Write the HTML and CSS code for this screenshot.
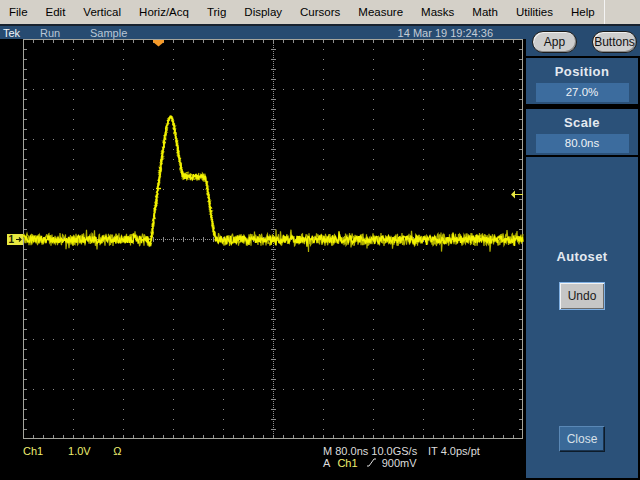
FILE: index.html
```html
<!DOCTYPE html>
<html>
<head>
    <title>Tek Scope</title>
    <link rel="stylesheet" href="styles.css">
</head>
<body>
    <div class="menubar">
        <span class="menu-item">File</span>
        <span class="menu-item">Edit</span>
        <span class="menu-item">Vertical</span>
        <span class="menu-item">Horiz/Acq</span>
        <span class="menu-item">Trig</span>
        <span class="menu-item">Display</span>
        <span class="menu-item">Cursors</span>
        <span class="menu-item">Measure</span>
        <span class="menu-item">Masks</span>
        <span class="menu-item">Math</span>
        <span class="menu-item">Utilities</span>
        <span class="menu-item">Help</span>
        <span class="menu-sep"></span>
    </div>

    <div class="main">
        <div class="scope">
            <div class="statusbar">
                <span class="tek">Tek</span>
                <span class="state run">Run</span>
                <span class="state">Sample</span>
                <span class="clock">14 Mar 19 19:24:36</span>
            </div>

            <svg class="screen" width="526" height="402" viewBox="0 39 526 402">
                <!-- graticule -->
                <g class="grid-dots" stroke-dasharray="1 9">
                    <line x1="73.5" y1="39" x2="73.5" y2="439"/>
                    <line x1="123.5" y1="39" x2="123.5" y2="439"/>
                    <line x1="173.5" y1="39" x2="173.5" y2="439"/>
                    <line x1="223.5" y1="39" x2="223.5" y2="439"/>
                    <line x1="323.5" y1="39" x2="323.5" y2="439"/>
                    <line x1="373.5" y1="39" x2="373.5" y2="439"/>
                    <line x1="423.5" y1="39" x2="423.5" y2="439"/>
                    <line x1="473.5" y1="39" x2="473.5" y2="439"/>
                    <line x1="23" y1="89.5" x2="523" y2="89.5"/>
                    <line x1="23" y1="139.5" x2="523" y2="139.5"/>
                    <line x1="23" y1="189.5" x2="523" y2="189.5"/>
                    <line x1="23" y1="289.5" x2="523" y2="289.5"/>
                    <line x1="23" y1="339.5" x2="523" y2="339.5"/>
                    <line x1="23" y1="389.5" x2="523" y2="389.5"/>
                </g>
                <g class="grid-dots">
                    <line x1="273.5" y1="39" x2="273.5" y2="439" stroke-dasharray="1 1"/>
                    <line x1="23" y1="239.5" x2="523" y2="239.5" stroke-dasharray="1 1"/>
                    <line x1="273.5" y1="39" x2="273.5" y2="439" stroke-width="5" stroke-dasharray="1 9"/>
                    <line x1="23" y1="239.5" x2="523" y2="239.5" stroke-width="5" stroke-dasharray="1 9"/>
                    <line x1="23" y1="41.5" x2="523" y2="41.5" stroke-width="3" stroke-dasharray="1 9"/>
                    <line x1="23" y1="436.5" x2="523" y2="436.5" stroke-width="3" stroke-dasharray="1 9"/>
                    <line x1="25.5" y1="39" x2="25.5" y2="439" stroke-width="3" stroke-dasharray="1 9"/>
                    <line x1="520.5" y1="39" x2="520.5" y2="439" stroke-width="3" stroke-dasharray="1 9"/>
                </g>
                <rect class="grid-frame" x="23.5" y="39.5" width="499" height="399"/>

                <!-- trace, filled in by the script below -->
                <polyline id="traceDim" class="trace-dim" points=""/>
                <polyline id="traceBright" class="trace" points=""/>
                <line class="trace" x1="156" y1="188.5" x2="161" y2="188.5"/>

                <!-- markers -->
                <polygon class="trig-pos" points="153,40 164,40 164,42 158.5,46.5 153,42"/>
                <polygon class="trig-level" points="511,194.5 515,190.5 515,198.5"/>
                <line class="trig-line" x1="514" y1="194.5" x2="523" y2="194.5"/>
                <rect class="ground" x="7" y="234" width="16" height="11"/>
                <text class="ground-label" x="8.5" y="243">1</text>
                <path class="ground-arrow" d="M16 239.5 H21 M19 237.5 L21 239.5 L19 241.5"/>
            </svg>

            <div class="readout">
                <div class="readout-ch">
                    <span class="field yellow">Ch1</span>
                    <span class="field yellow">1.0V</span>
                    <span class="field yellow">&Omega;</span>
                </div>
                <div class="readout-time">
                    <div>
                        <span class="timebase">M 80.0ns 10.0GS/s</span>
                        <span>IT 4.0ps/pt</span>
                    </div>
                    <div>
                        <span class="trig-src">A</span>
                        <span class="trig-src yellow">Ch1</span>
                        <svg class="slope" width="9" height="9" viewBox="0 0 9 9">
                            <polyline points="0,8 2,8 7,1 9,1"/>
                        </svg>
                        <span>900mV</span>
                    </div>
                </div>
            </div>
        </div>

        <div class="panel">
            <div class="panel-top">
                <button class="pill">App</button>
                <button class="pill">Buttons</button>
            </div>
            <div class="section">
                <div class="section-title">Position</div>
                <div class="section-value">27.0%</div>
            </div>
            <div class="section scale">
                <div class="section-title">Scale</div>
                <div class="section-value">80.0ns</div>
            </div>
            <div class="section autoset">
                <div class="section-title">Autoset</div>
                <button class="btn undo">Undo</button>
                <button class="btn close">Close</button>
            </div>
        </div>
    </div>

    <script>
        // seeded random so the trace looks the same on every load
        let seed = 12345;
        function rand() {
            seed = (seed * 16807) % 2147483647;
            return (seed - 1) / 2147483646;
        }

        // pulse outline: x, y, noise amplitude
        const pulse = [
            [148, 240, 8], [150, 245, 3], [152, 233, 2.5], [155, 209, 2.5],
            [158, 188, 2.5], [161, 165, 2.5], [164, 143, 2.5], [166, 130, 2.5],
            [168, 121, 2.5], [170, 116.5, 2.5], [172, 118, 2.5], [174, 126, 2.5],
            [176, 138, 2.5], [178, 151, 2.5], [180, 163, 2.5], [182, 172, 4],
            [184, 176.5, 7], [194, 177, 7], [204, 177, 7], [206, 180, 2.5],
            [208, 192, 2.5], [210, 206, 2.5], [212, 220, 2.5], [214, 233, 2.5],
            [216, 240, 8]
        ];

        function baseline(from, to, amp, pts) {
            for (let x = from; x <= to; x += 0.5) {
                let y = 239.5 + (rand() - 0.5) * amp;
                if (rand() < 0.07) y += (rand() - 0.5) * amp * 1.2;
                pts.push(x.toFixed(1) + ',' + y.toFixed(1));
            }
        }

        function buildTrace(scale) {
            const pts = [];
            baseline(23, 147.5, 10 * scale, pts);
            for (let i = 0; i < pulse.length - 1; i++) {
                const [x1, y1, a1] = pulse[i];
                const [x2, y2, a2] = pulse[i + 1];
                const len = Math.hypot(x2 - x1, y2 - y1);
                const steps = Math.ceil(len / 0.5);
                for (let s = 0; s < steps; s++) {
                    const t = s / steps;
                    const amp = (a1 + (a2 - a1) * t) * scale;
                    const x = x1 + (x2 - x1) * t + (rand() - 0.5) * 1.8 * scale;
                    const y = y1 + (y2 - y1) * t + (rand() - 0.5) * amp;
                    pts.push(x.toFixed(1) + ',' + y.toFixed(1));
                }
            }
            baseline(216, 523, 10 * scale, pts);
            return pts.join(' ');
        }

        document.getElementById('traceDim').setAttribute('points', buildTrace(1.3));
        document.getElementById('traceBright').setAttribute('points', buildTrace(0.8));
    </script>
</body>
</html>
```

FILE: styles.css
```css
body {
    margin: 0;
    width: 640px;
    height: 480px;
    overflow: hidden;
    background-color: #000;
    font-family: "Liberation Sans", Arial, sans-serif;
}
.menubar {
    height: 24px;
    background-color: #d4d0c8;
    border-bottom: 2px solid #18222e;
    display: flex;
    align-items: center;
    font-size: 11.5px;
    color: #000;
}
.menu-item {
    padding: 0 9px;
}
.menu-sep {
    width: 1px;
    height: 24px;
    background-color: #a09c94;
    border-right: 1px solid #f4f4f4;
    margin-left: auto;
    margin-right: 45px;
}
.main {
    display: flex;
    height: 454px;
}
.scope {
    width: 526px;
}
.statusbar {
    height: 13px;
    background-color: #274b71;
    display: flex;
    align-items: center;
    font-size: 11px;
    color: #b9c6d6;
}
.tek {
    width: 37px;
    padding-left: 3px;
    color: #f0f4f8;
}
.state.run {
    width: 50px;
}
.clock {
    margin-left: auto;
    padding-right: 33px;
    color: #c4ccd6;
}
.screen {
    display: block;
}
.grid-dots {
    stroke: #8e8e8e;
    stroke-width: 1;
}
.grid-frame {
    fill: none;
    stroke: #a4a49c;
}
.trace {
    fill: none;
    stroke: #f4f400;
    stroke-width: 1.4;
}
.trace-dim {
    fill: none;
    stroke: #b0b000;
    stroke-width: 1.2;
}
.trig-pos {
    fill: #f59a2a;
}
.trig-level {
    fill: #e8e840;
}
.trig-line {
    stroke: #e8e840;
    stroke-width: 1;
}
.ground {
    fill: #e8e840;
}
.ground-label {
    font-size: 10px;
    font-weight: bold;
    fill: #202000;
}
.ground-arrow {
    fill: none;
    stroke: #202000;
    stroke-width: 1.2;
}
.readout {
    display: flex;
    padding-top: 4px;
    font-size: 11px;
    line-height: 12px;
    color: #dcdcdc;
}
.readout-ch {
    width: 300px;
    padding-left: 23px;
}
.field {
    display: inline-block;
    width: 42px;
}
.yellow {
    color: #eeee70;
}
.timebase {
    display: inline-block;
    width: 102px;
}
.trig-src {
    margin-right: 4px;
}
.slope {
    stroke: #dcdcdc;
    fill: none;
    margin: 0 3px 0 2px;
}
.panel {
    width: 114px;
    display: flex;
    flex-direction: column;
}
.panel-top {
    height: 30px;
    background-color: #274b71;
    display: flex;
    align-items: flex-start;
    padding: 5px 0 0 6px;
    box-sizing: border-box;
    gap: 15px;
}
.pill {
    height: 22px;
    width: 45px;
    padding: 0;
    border: 1px solid #1a1a1a;
    border-radius: 11px;
    background-color: #cdcdcd;
    box-shadow: inset 1px 1px 0 #efefef, inset -1px -1px 0 #8a8a8a;
    font-family: "Liberation Sans", Arial, sans-serif;
    font-size: 12px;
    color: #111;
}
.section {
    background-color: #2b5179;
    margin: 2px 2px 0 0;
    display: flex;
    flex-direction: column;
    align-items: center;
    padding: 6px 0 2px;
}
.section.scale {
    margin-top: 5px;
}
.section-title {
    height: 16px;
    line-height: 16px;
    font-size: 13px;
    font-weight: bold;
    color: #e4e9f0;
    letter-spacing: 0.4px;
}
.section-value {
    width: 93px;
    height: 19px;
    line-height: 19px;
    margin-top: 3px;
    background-color: #3c6c9e;
    text-align: center;
    font-size: 11.5px;
    color: #eef2f6;
}
.section.autoset {
    flex: 1;
    margin-bottom: 2px;
    padding-top: 92px;
}
.btn {
    width: 46px;
    padding: 0;
    font-family: "Liberation Sans", Arial, sans-serif;
    font-size: 12px;
}
.btn.undo {
    margin-top: 17px;
    height: 28px;
    background-color: #c6c6c6;
    color: #1a1a1a;
    border: 1px solid #7fb0e4;
    box-shadow: inset 1px 1px 0 #f2f2f2, inset -1px -1px 0 #6a6a6a;
}
.btn.close {
    margin-top: auto;
    margin-bottom: 24px;
    height: 26px;
    background-color: #3a6998;
    color: #d8e0e8;
    border: 1px solid #0e1c2a;
    border-top-color: #5a88b6;
    border-left-color: #5a88b6;
    box-shadow: inset -1px -1px 0 #1a3450;
}
```
